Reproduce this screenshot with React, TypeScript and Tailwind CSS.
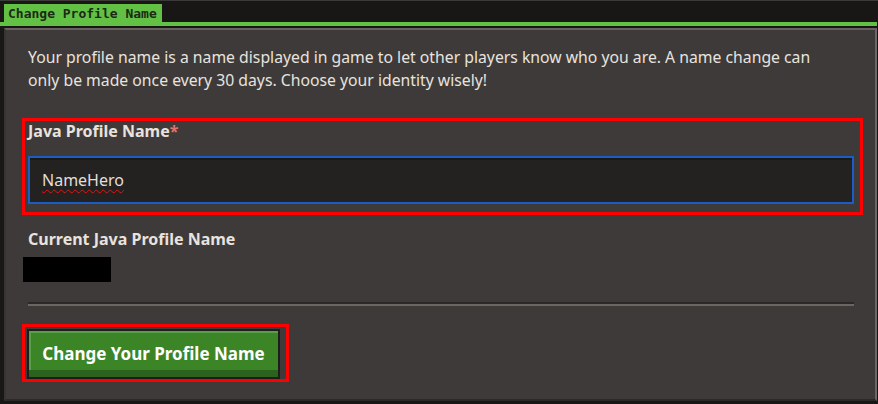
export default function App() {
  return (
    <div className="w-[878px] h-[404px] bg-[#181716] overflow-hidden flex flex-col font-['Noto_Sans',sans-serif]">
      <div className="h-[1px] bg-[#3c3a39]" />
      {/* tab header */}
      <div className="pl-[4px] pt-[3px] flex">
        <div className="h-[18px] w-[158px] bg-[#62c144] pl-[4px] pt-[2px] text-[13px] leading-[16px] font-bold text-[#1b2a14] font-['DejaVu_Sans_Mono',monospace]">
          Change Profile Name
        </div>
      </div>
      <div className="h-[4px] w-[877px] bg-[#62c144]" />

      {/* panel */}
      <div className="mt-[2px] ml-[4px] w-[873px] h-[373px] bg-[#3e3a39] border-t-2 border-r-2 border-l-2 border-b-2 border-t-[#67625f] border-r-[#6b6764] border-l-[#383433] border-b-[#2c2928] pl-[22px] pr-[21px] pt-[16px] flex flex-col">
        <p className="pr-[30px] text-[15.75px] leading-[23px] text-[#e8e3df]">
          Your profile name is a name displayed in game to let other players know who you are. A name change can only be made once every 30 days. Choose your identity wisely!
        </p>

        <div className="mt-[26px] -ml-[6px] -mr-[9px] border-[3px] border-[#ff0000] pl-[3px] pr-[6px] pb-[8px]">
          <div className="text-[16px] leading-[20px] font-bold text-[#e8e3df]">
            Java Profile Name<span className="text-[#e5706a]">*</span>
          </div>
          <div className="mt-[15px] h-[48px] border-2 border-[#1b5cc5] bg-[#242221] shadow-[inset_0_2px_0_#1a1918] pl-[12px] flex items-center">
            <span className="text-[16px] text-[#e2dedb] underline decoration-wavy decoration-[#e01515] decoration-1 underline-offset-[3px]">NameHero</span>
          </div>
        </div>

        <div className="mt-[14px] text-[16px] leading-[20px] font-bold text-[#e8e3df]">Current Java Profile Name</div>
        <div className="mt-[8px] -ml-[5px] w-[88px] h-[25px] bg-black" />

        <div className="mt-[20px] h-[4px] border-t-2 border-[#2b2827] bg-[#6b6662]" />

        <div className="mt-[18px] -ml-[6px] w-[267px] border-[3px] border-[#ff0000] pl-[2px] pr-[6px] pt-[2px]">
          <button className="w-[253px] h-[50px] border-2 border-[#1d1d1b] bg-[#3c8527] shadow-[inset_0_-7px_0_#2b621d,inset_2px_2px_0_#5a9e47] flex items-center justify-center text-[17px] font-bold text-white">
            Change Your Profile Name
          </button>
        </div>
      </div>
    </div>
  );
}
